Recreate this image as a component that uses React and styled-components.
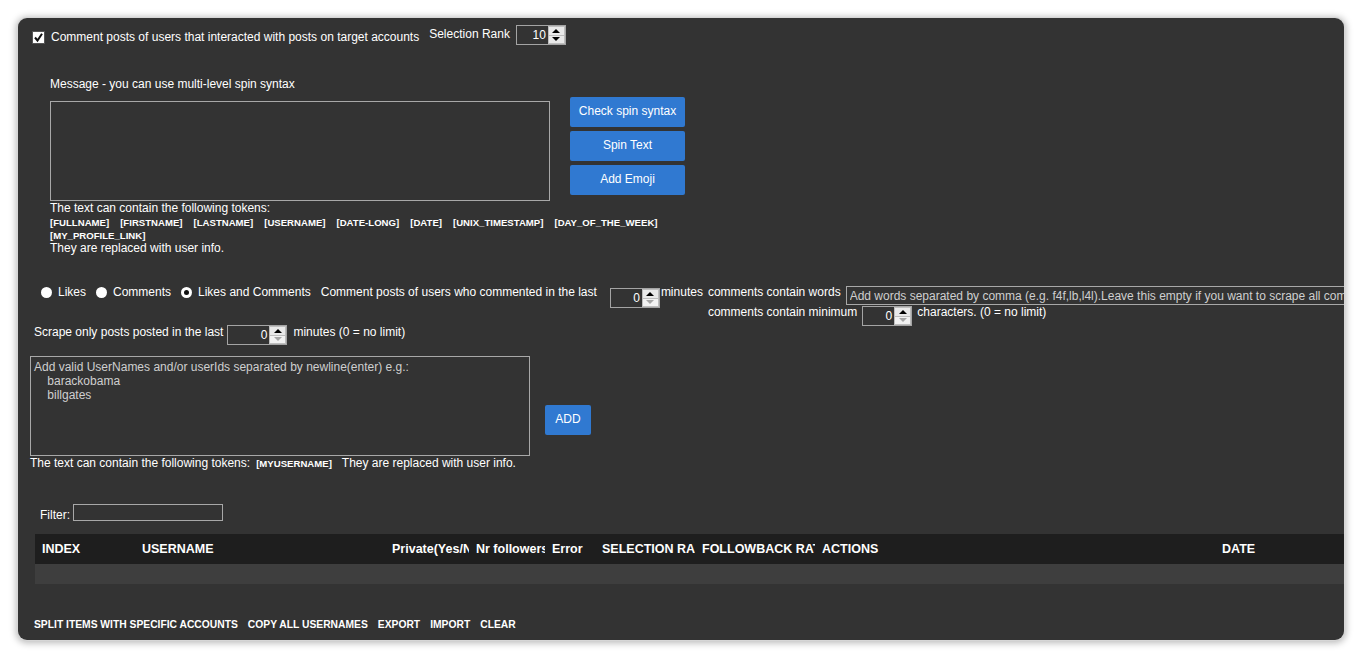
import React from 'react'
import styled, { createGlobalStyle } from 'styled-components'

const GlobalStyle = createGlobalStyle`
  html, body {
    margin: 0;
    background: #ffffff;
  }
  * { box-sizing: border-box; }
`

const TOKENS = [
    '[FULLNAME]', '[FIRSTNAME]', '[LASTNAME]', '[USERNAME]', '[DATE-LONG]',
    '[DATE]', '[UNIX_TIMESTAMP]', '[DAY_OF_THE_WEEK]', '[MY_PROFILE_LINK]',
]

const COLUMNS = [
    { title: 'INDEX', width: 100 },
    { title: 'USERNAME', width: 250 },
    { title: 'Private(Yes/No)', width: 84 },
    { title: 'Nr followers', width: 76 },
    { title: 'Error', width: 50 },
    { title: 'SELECTION RANK', width: 100 },
    { title: 'FOLLOWBACK RATIO', width: 120 },
    { title: 'ACTIONS', width: 400 },
    { title: 'DATE', width: 0 },
]

const LINKS = ['SPLIT ITEMS WITH SPECIFIC ACCOUNTS', 'COPY ALL USERNAMES', 'EXPORT', 'IMPORT', 'CLEAR']

function Spinner({ value, width = 50, downDisabled }) {
    return (
        <SpinBox $w={width}>
            <SpinValue>{value}</SpinValue>
            <SpinArrows>
                <SpinArrow $up />
                <SpinArrow $disabled={downDisabled} />
            </SpinArrows>
        </SpinBox>
    )
}

function App() {
    return (
        <Page>
            <GlobalStyle />
            <Window>
                <TopRow>
                    <CheckLabel>
                        <CheckBox>
                            <svg width="11" height="11" viewBox="0 0 11 11">
                                <polyline points="2,5.5 4.5,8.5 9,1.8" fill="none" stroke="#111" strokeWidth="2" />
                            </svg>
                        </CheckBox>
                        Comment posts of users that interacted with posts on target accounts
                    </CheckLabel>
                    <RankLabel>Selection Rank</RankLabel>
                    <Spinner value="10" />
                </TopRow>

                <MessageGrid>
                    <div>
                        <FieldLabel>Message - you can use multi-level spin syntax</FieldLabel>
                        <TextBox $w={500} $h={100} />
                    </div>
                    <ButtonColumn>
                        <BlueButton>Check spin syntax</BlueButton>
                        <BlueButton>Spin Text</BlueButton>
                        <BlueButton>Add Emoji</BlueButton>
                    </ButtonColumn>
                </MessageGrid>

                <TokenBlock>
                    <div>The text can contain the following tokens:</div>
                    <TokenList>
                        {TOKENS.map(t => <Token key={t}>{t}</Token>)}
                    </TokenList>
                    <div>They are replaced with user info.</div>
                </TokenBlock>

                <OptionsRow>
                    <RadioItem><Radio />Likes</RadioItem>
                    <RadioItem><Radio />Comments</RadioItem>
                    <RadioItem><Radio $checked />Likes and Comments</RadioItem>
                    <span>Comment posts of users who commented in the last</span>
                    <SpinSlot $ml={13} $mt={3}><Spinner value="0" downDisabled /></SpinSlot>
                    <Gap $ml={1}>minutes</Gap>
                    <WordsColumn>
                        <WordsRow>
                            <span>comments contain words</span>
                            <WordsInput placeholder="Add words separated by comma (e.g. f4f,lb,l4l).Leave this empty if you want to scrape all comments" />
                        </WordsRow>
                        <WordsRow>
                            <span>comments contain minimum</span>
                            <SpinSlot $ml={5} $mt={1}><Spinner value="0" downDisabled /></SpinSlot>
                            <Gap $ml={5}>characters. (0 = no limit)</Gap>
                        </WordsRow>
                    </WordsColumn>
                </OptionsRow>

                <ScrapeRow>
                    <span>Scrape only posts posted in the last</span>
                    <SpinSlot $ml={4}><Spinner value="0" width={60} downDisabled /></SpinSlot>
                    <Gap $ml={6}>minutes (0 = no limit)</Gap>
                </ScrapeRow>

                <UsersRow>
                    <TextBox
                        $w={500}
                        $h={100}
                        placeholder={'Add valid UserNames and/or userIds separated by newline(enter) e.g.:\n    barackobama\n    billgates'}
                    />
                    <AddButton>ADD</AddButton>
                </UsersRow>

                <InlineTokens>
                    The text can contain the following tokens:
                    <Token $ml={6}>[MYUSERNAME]</Token>
                    <Gap $ml={10}>They are replaced with user info.</Gap>
                </InlineTokens>

                <FilterRow>
                    Filter:
                    <FilterInput />
                </FilterRow>

                <Table>
                    <HeaderRow>
                        {COLUMNS.map(c => <HeaderCell key={c.title}>{c.title}</HeaderCell>)}
                    </HeaderRow>
                    <EmptyRow />
                </Table>

                <LinkBar>
                    {LINKS.map(l => <LinkItem key={l}>{l}</LinkItem>)}
                </LinkBar>
            </Window>
        </Page>
    )
}

export default App

const Page = styled.div`
    padding: 18px 18px 19px 18px;
`

const Window = styled.div`
    width: 1326px;
    height: 622px;
    background: #333333;
    border-radius: 9px;
    box-shadow: 0 0 0 1px #d6d6d6, 0 1px 7px 2px rgba(0, 0, 0, 0.28);
    overflow: hidden;
    color: #ffffff;
    font-family: "Liberation Sans", Arial, sans-serif;
    font-size: 12px;
    line-height: 14px;
`

const TopRow = styled.div`
    display: flex;
    align-items: center;
    height: 20px;
    margin-top: 7px;
    padding-left: 14px;
`

const CheckLabel = styled.label`
    display: flex;
    align-items: center;
    gap: 6px;
    margin-top: 4px;
`

const CheckBox = styled.span`
    width: 13px;
    height: 13px;
    background: #ffffff;
    border: 1px solid #555;
    display: flex;
    align-items: center;
    justify-content: center;
`

const RankLabel = styled.span`
    margin-left: 10px;
    margin-right: 6px;
    margin-top: -2px;
`

const SpinBox = styled.div`
    display: flex;
    width: ${p => p.$w}px;
    height: 20px;
    border: 1px solid #a4a4a4;
`

const SpinValue = styled.div`
    flex: 1;
    text-align: right;
    padding-right: 2px;
    line-height: 18px;
`

const SpinArrows = styled.div`
    width: 17px;
    display: flex;
    flex-direction: column;
    padding: 1px;
    gap: 1px;
    background: #bdbdbd;
`

const SpinArrow = styled.div`
    flex: 1;
    background: ${p => (p.$disabled ? '#f2f2f2' : '#e9e9e9')};
    display: flex;
    align-items: center;
    justify-content: center;

    &::after {
        content: '';
        border-left: 4px solid transparent;
        border-right: 4px solid transparent;
        ${p => (p.$up ? 'border-bottom' : 'border-top')}: 4px solid ${p => (p.$disabled ? '#a6a6a6' : '#000000')};
    }
`

const SpinSlot = styled.div`
    margin-left: ${p => p.$ml || 0}px;
    margin-top: ${p => p.$mt || 0}px;
`

const Gap = styled.span`
    margin-left: ${p => p.$ml || 0}px;
`

const MessageGrid = styled.div`
    display: grid;
    grid-template-columns: 500px 115px;
    column-gap: 20px;
    margin-top: 31px;
    padding-left: 32px;
`

const FieldLabel = styled.div`
    line-height: 16px;
    margin-bottom: 9px;
`

const TextBox = styled.textarea`
    display: block;
    width: ${p => p.$w}px;
    height: ${p => p.$h}px;
    background: transparent;
    border: 1px solid #a8a8a8;
    color: #ffffff;
    font-family: "Liberation Sans", Arial, sans-serif;
    font-size: 12px;
    line-height: 14px;
    padding: 3px 3px;
    resize: none;
    outline: none;

    &::placeholder {
        color: #cfcfcf;
        opacity: 1;
    }
`

const ButtonColumn = styled.div`
    display: flex;
    flex-direction: column;
    gap: 4px;
    padding-top: 21px;
`

const BlueButton = styled.button`
    height: 30px;
    background: #3079d1;
    border: none;
    border-radius: 2px;
    color: #ffffff;
    font-family: "Liberation Sans", Arial, sans-serif;
    font-size: 12px;
    padding: 0 0 2px;
`

const AddButton = styled(BlueButton)`
    width: 46px;
    margin-left: 15px;
    margin-top: 49px;
`

const TokenBlock = styled.div`
    padding-left: 32px;
    line-height: 13px;
    padding-top: 1px;
`

const TokenList = styled.div`
    display: flex;
    flex-wrap: wrap;
    column-gap: 11px;
    max-width: 650px;
    padding-top: 1px;
`

const Token = styled.span`
    font-weight: bold;
    font-size: 9.6px;
    margin-left: ${p => p.$ml || 0}px;
`

const OptionsRow = styled.div`
    display: flex;
    align-items: flex-start;
    height: 40px;
    margin-top: 30px;
    padding-left: 23px;
    white-space: nowrap;
`

const RadioItem = styled.label`
    display: flex;
    align-items: center;
    gap: 6px;
    margin-right: 10px;
`

const Radio = styled.span`
    width: 11px;
    height: 11px;
    border-radius: 50%;
    background: #ffffff;
    display: flex;
    align-items: center;
    justify-content: center;

    &::after {
        content: '';
        width: 5px;
        height: 5px;
        border-radius: 50%;
        background: ${p => (p.$checked ? '#111111' : 'transparent')};
    }
`

const WordsColumn = styled.div`
    display: flex;
    flex-direction: column;
    margin-left: 5px;
`

const WordsRow = styled.div`
    display: flex;
    align-items: flex-start;
    height: 20px;
`

const WordsInput = styled.input`
    width: 520px;
    height: 19px;
    margin-left: 5px;
    margin-top: 1px;
    background: transparent;
    border: 1px solid #a8a8a8;
    color: #ffffff;
    font-family: "Liberation Sans", Arial, sans-serif;
    font-size: 12px;
    padding: 0 3px;
    outline: none;

    &::placeholder {
        color: #cfcfcf;
        opacity: 1;
    }
`

const ScrapeRow = styled.div`
    display: flex;
    align-items: flex-start;
    height: 20px;
    padding-left: 16px;
`

const UsersRow = styled.div`
    display: flex;
    align-items: flex-start;
    margin-top: 11px;
    padding-left: 12px;
`

const InlineTokens = styled.div`
    display: flex;
    align-items: baseline;
    padding-left: 12px;
`

const FilterRow = styled.div`
    display: flex;
    align-items: flex-end;
    margin-top: 33px;
    padding-left: 22px;
    line-height: 14px;
`

const FilterInput = styled.input`
    width: 150px;
    height: 17px;
    margin-left: 3px;
    margin-bottom: 1px;
    background: transparent;
    border: 1px solid #a8a8a8;
    outline: none;
`

const Table = styled.div`
    margin-top: 12px;
    margin-left: 17px;
`

const HeaderRow = styled.div`
    display: grid;
    grid-template-columns: ${COLUMNS.map(c => (c.width ? `${c.width}px` : '1fr')).join(' ')};
    height: 30px;
    background: #1e1e1e;
    align-items: center;
`

const HeaderCell = styled.div`
    padding-left: 7px;
    overflow: hidden;
    white-space: nowrap;
    text-overflow: clip;
    font-weight: bold;
    font-size: 12.5px;
`

const EmptyRow = styled.div`
    height: 20px;
    background: #3e3e3e;
`

const LinkBar = styled.div`
    display: flex;
    gap: 10px;
    margin-top: 34px;
    padding-left: 16px;
`

const LinkItem = styled.span`
    font-weight: bold;
    font-size: 10.3px;
    cursor: pointer;
`
